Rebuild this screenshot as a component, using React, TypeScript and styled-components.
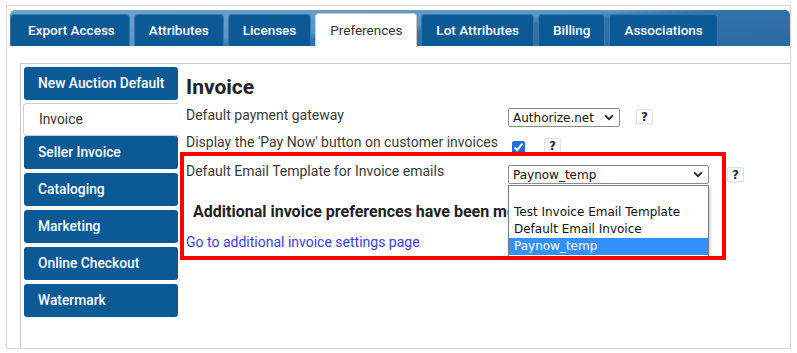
import styled, { createGlobalStyle } from 'styled-components';

const GlobalStyle = createGlobalStyle`
  html, body { margin: 0; padding: 0; background: #fff; }
  body { font-family: Roboto, "Liberation Sans", Arial, sans-serif; color: #333; }
`;

const Frame = styled.div`
  box-sizing: border-box;
  margin: 5px 0 0 6px;
  width: 785px;
  height: 344px;
  border: 1px solid #d8d8d8;
  padding: 4px 0 0 3px;
  display: flex;
  flex-direction: column;
  overflow: hidden;
`;

const TabBar = styled.div`
  height: 36px;
  display: flex;
  align-items: flex-end;
  gap: 4px;
  border-radius: 5px 5px 0 0;
  background: linear-gradient(176deg, #6ea5ce 0%, #5b95c4 48%, #3273a8 56%, #2b6aa0 100%);
`;

const Tab = styled.div<{ $active?: boolean }>`
  box-sizing: border-box;
  height: ${p => (p.$active ? 34 : 32)}px;
  margin-bottom: ${p => (p.$active ? -1 : 0)}px;
  padding: 0 14px;
  border-radius: 4px 4px 0 0;
  border: 1px solid ${p => (p.$active ? '#c9c9c9' : '#3c77a8')};
  border-bottom: none;
  background: ${p => (p.$active ? '#fff' : '#0b5a96')};
  color: ${p => (p.$active ? '#333' : '#fff')};
  font-size: 13.5px;
  font-weight: ${p => (p.$active ? 400 : 500)};
  line-height: ${p => (p.$active ? 33 : 31)}px;
  white-space: nowrap;

  &:first-child {
    padding-left: 17px;
  }
`;

const Panel = styled.div`
  flex: 1;
  margin: 17px 0 0 10px;
  border-top: 1px solid #c8c8c8;
  border-left: 1px solid #c8c8c8;
  padding: 3px 0 0 3px;
  display: flex;
  gap: 8px;
`;

const SideNav = styled.div`
  width: 154px;
  display: flex;
  flex-direction: column;
`;

const NavItem = styled.div<{ $active?: boolean }>`
  box-sizing: border-box;
  height: 33px;
  margin: ${p => (p.$active ? '-1px 0 0 -1px' : '0 0 4px')};
  padding-left: ${p => (p.$active ? 15 : 14)}px;
  width: ${p => (p.$active ? 155 : 154)}px;
  border-radius: ${p => (p.$active ? '4px 0 0 4px' : '3px')};
  border: ${p => (p.$active ? '1px solid #cfcfcf' : 'none')};
  border-right: none;
  background: ${p => (p.$active ? '#fff' : '#0b5a96')};
  color: ${p => (p.$active ? '#333' : '#fff')};
  font-size: 13.8px;
  font-weight: ${p => (p.$active ? 400 : 500)};
  line-height: ${p => (p.$active ? 31 : 33)}px;
  white-space: nowrap;
`;

const Content = styled.div`
  position: relative;
  flex: 1;
`;

const Heading = styled.h2`
  margin: 7px 0 0;
  font-size: 21px;
  font-weight: 700;
  line-height: 26px;
  color: #222;
`;

const Row = styled.div<{ $height: number; $gap?: number }>`
  display: flex;
  align-items: flex-start;
  height: ${p => p.$height}px;
  margin-top: ${p => p.$gap ?? 0}px;
`;

const Label = styled.div`
  width: 322px;
  flex: none;
  font-size: 14px;
  line-height: 18px;
  color: #3a3a3a;
  white-space: nowrap;
`;

const SelectWrap = styled.div<{ $top: number }>`
  position: relative;
  margin-top: ${p => p.$top}px;
`;

const SelectBox = styled.div<{ $width: number }>`
  box-sizing: border-box;
  width: ${p => p.$width}px;
  height: 19px;
  border: 1px solid #8c8c8c;
  border-radius: 2px;
  padding: 0 5px 0 4px;
  display: flex;
  align-items: center;
  justify-content: space-between;
  font-family: "DejaVu Sans", Verdana, sans-serif;
  font-size: 12px;
  color: #111;
  background: #fff;
`;

const Help = styled.div<{ $top: number; $left: number }>`
  box-sizing: border-box;
  width: 17px;
  height: 15px;
  margin: ${p => p.$top}px 0 0 ${p => p.$left}px;
  border: 1px solid #e2e2e2;
  border-radius: 2px;
  box-shadow: 0 1px 1px rgba(0, 0, 0, 0.06);
  background: #fff;
  display: flex;
  align-items: center;
  justify-content: center;
  font-family: "DejaVu Sans", Verdana, sans-serif;
  font-size: 12px;
  font-weight: 700;
  color: #1b2a4a;
`;

const Check = styled.input`
  width: 13px;
  height: 13px;
  margin: 8px 0 0 4px;
  accent-color: #1f6fd8;
`;

const OptionList = styled.div`
  position: absolute;
  top: 20px;
  left: 0;
  z-index: 2;
  box-sizing: border-box;
  width: 201px;
  padding: 1px 0;
  border: 1px solid #7c7c7c;
  background: #fff;
  box-shadow: 1px 2px 3px rgba(0, 0, 0, 0.25);
`;

const Option = styled.div<{ $selected?: boolean }>`
  height: 17px;
  line-height: 17px;
  padding-left: 5px;
  font-family: "DejaVu Sans", Verdana, sans-serif;
  font-size: 12px;
  color: ${p => (p.$selected ? '#fff' : '#111')};
  background: ${p => (p.$selected ? '#3291ff' : 'transparent')};
  white-space: nowrap;
`;

const SubHeading = styled.h3`
  margin: 16px 0 0 7px;
  font-size: 16px;
  font-weight: 700;
  line-height: 20px;
  color: #222;
  white-space: nowrap;
`;

const SettingsLink = styled.a`
  display: block;
  margin-top: 11px;
  font-size: 14px;
  line-height: 18px;
  color: #3d3bf0;
  text-decoration: none;
`;

const Highlight = styled.div`
  position: absolute;
  left: -6px;
  top: 85px;
  width: 546px;
  height: 108px;
  box-sizing: border-box;
  border: 4px solid #ff0000;
  z-index: 3;
  pointer-events: none;
`;

const Chevron = () => (
  <svg width="10" height="7" viewBox="0 0 10 7">
    <path d="M1.2 1.4 L5 5.2 L8.8 1.4" fill="none" stroke="#222" strokeWidth="1.8" />
  </svg>
);

const tabs = ['Export Access', 'Attributes', 'Licenses', 'Preferences', 'Lot Attributes', 'Billing', 'Associations'];
const navItems = ['New Auction Default', 'Invoice', 'Seller Invoice', 'Cataloging', 'Marketing', 'Online Checkout', 'Watermark'];
const templates = ['', 'Test Invoice Email Template', 'Default Email Invoice', 'Paynow_temp'];

export default function App() {
  return (
    <>
      <GlobalStyle />
      <Frame>
        <TabBar>
          {tabs.map(t => (
            <Tab key={t} $active={t === 'Preferences'}>{t}</Tab>
          ))}
        </TabBar>
        <Panel>
          <SideNav>
            {navItems.map(n => (
              <NavItem key={n} $active={n === 'Invoice'}>{n}</NavItem>
            ))}
          </SideNav>
          <Content>
            <Heading>Invoice</Heading>
            <Row $height={27} $gap={6}>
              <Label>Default payment gateway</Label>
              <SelectWrap $top={2}>
                <SelectBox $width={112}>
                  <span>Authorize.net</span>
                  <Chevron />
                </SelectBox>
              </SelectWrap>
              <Help $top={3} $left={16}>?</Help>
            </Row>
            <Row $height={29}>
              <Label>Display the 'Pay Now' button on customer invoices</Label>
              <Check type="checkbox" defaultChecked />
              <Help $top={5} $left={19}>?</Help>
            </Row>
            <Row $height={24}>
              <Label>Default Email Template for Invoice emails</Label>
              <SelectWrap $top={3}>
                <SelectBox $width={201}>
                  <span>Paynow_temp</span>
                  <Chevron />
                </SelectBox>
                <OptionList>
                  {templates.map((o, i) => (
                    <Option key={i} $selected={o === 'Paynow_temp'}>{o || '\u00a0'}</Option>
                  ))}
                </OptionList>
              </SelectWrap>
              <Help $top={5} $left={18}>?</Help>
            </Row>
            <SubHeading>Additional invoice preferences have been moved</SubHeading>
            <SettingsLink href="#">Go to additional invoice settings page</SettingsLink>
            <Highlight />
          </Content>
        </Panel>
      </Frame>
    </>
  );
}
